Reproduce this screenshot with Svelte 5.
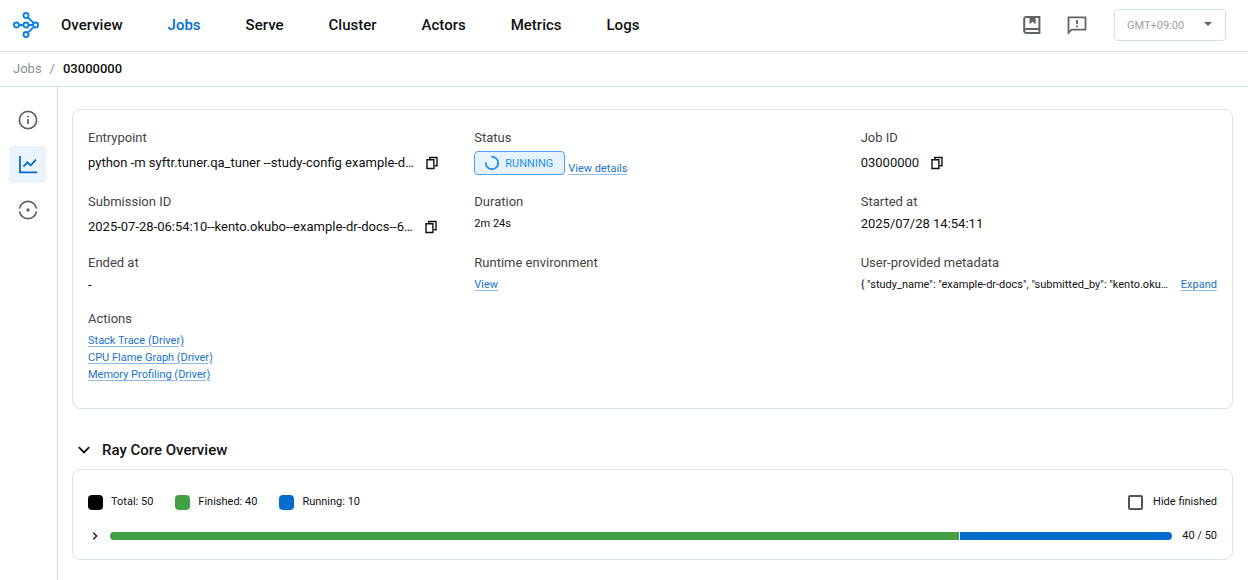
<script lang="ts">
  const navItems = ['Overview', 'Jobs', 'Serve', 'Cluster', 'Actors', 'Metrics', 'Logs'];
  const actions = ['Stack Trace (Driver)', 'CPU Flame Graph (Driver)', 'Memory Profiling (Driver)'];

  const total = 50;
  const finished = 40;
  const running = 10;

  const legend = [
    { name: 'Total', value: total, kind: 'total' },
    { name: 'Finished', value: finished, kind: 'finished' },
    { name: 'Running', value: running, kind: 'running' }
  ];

  let hideFinished = $state(false);
</script>

{#snippet copyButton(label: string)}
  <button class="copy" aria-label={label}>
    <svg width="12" height="14" viewBox="0 0 12 14" fill="none" stroke="currentColor" stroke-width="1.4">
      <path d="M3.8 3.4V1.5h7.2v8.3H8.6" />
      <path d="M1 3.8h6.9v8.7H1z" />
    </svg>
  </button>
{/snippet}

<header class="topbar">
  <a class="logo" href="#/" aria-label="Home">
    <svg width="28" height="28" viewBox="0 0 28 28" fill="none" stroke="#0f80e6" stroke-width="1.9">
      <circle cx="4.4" cy="14" r="2.5" />
      <circle cx="14" cy="14" r="2.5" />
      <circle cx="23.6" cy="14" r="2.5" />
      <circle cx="14" cy="4.5" r="2.5" />
      <circle cx="14" cy="23.5" r="2.5" />
      <path d="M6.9 14h4.6M16.5 14h4.6M15.8 6.3l6 5.8M15.8 21.7l6-5.8" />
    </svg>
  </a>
  <nav class="nav">
    {#each navItems as item}
      <a href="#/{item.toLowerCase()}" class:active={item === 'Jobs'}>{item}</a>
    {/each}
  </nav>
  <div class="tools">
    <a class="tool" href="#/docs" aria-label="Documentation">
      <svg width="20" height="20" viewBox="0 0 20 20" fill="none" stroke="currentColor" stroke-width="2">
        <path d="M17.4 14V2H4.2A1.9 1.9 0 0 0 2.2 4v12a2 2 0 0 0 2 2h13.2v-4H4.2a2 2 0 0 0-2 2" />
        <path d="M7.5 2h6.2v7.3l-3.1-2.5-3.1 2.5z" fill="currentColor" stroke="none" />
      </svg>
    </a>
    <a class="tool" href="#/feedback" aria-label="Feedback">
      <svg width="20" height="20" viewBox="0 0 20 20" fill="none" stroke="currentColor" stroke-width="1.8">
        <path d="M1.5 17.8V2.4h17v12.2H4.7z" />
        <path d="M10 4.9v4.2M10 10.4v1.9" />
      </svg>
    </a>
    <div class="timezone">
      <select aria-label="Timezone">
        <option>GMT+09:00</option>
      </select>
      <svg width="8" height="4" viewBox="0 0 8 4"><path d="M0 0h8L4 4z" fill="#666" /></svg>
    </div>
  </div>
</header>

<div class="breadcrumb">
  <a href="#/jobs">Jobs</a>
  <span class="slash">/</span>
  <span class="current">03000000</span>
</div>

<div class="body">
  <aside class="sidebar">
    <a href="#/info" aria-label="Info">
      <svg width="20" height="20" viewBox="0 0 20 20" fill="none" stroke="currentColor" stroke-width="1.7">
        <circle cx="10" cy="10" r="8.6" />
        <path d="M10 9v5M10 5.8v1.7" />
      </svg>
    </a>
    <a href="#/charts" class="active" aria-label="Charts">
      <svg width="20" height="20" viewBox="0 0 20 20" fill="none" stroke="currentColor" stroke-width="1.8">
        <path d="M2 1v16.4h17" />
        <path d="M5.4 11.7l4-4.4 3.3 3.2 5.2-5.8" />
      </svg>
    </a>
    <a href="#/actors" aria-label="Actors">
      <svg width="20" height="20" viewBox="0 0 20 20" fill="none" stroke="currentColor" stroke-width="1.7">
        <path d="M1.5 8.6a8.6 8.6 0 0 1 17 0M1.5 11.4a8.6 8.6 0 0 0 17 0" />
        <circle cx="10" cy="10" r="1.7" fill="currentColor" stroke="none" />
      </svg>
    </a>
  </aside>

  <main>
    <section class="card details">
      <div class="field">
        <h2>Entrypoint</h2>
        <div class="value copyable">
          <span class="ellipsis">python -m syftr.tuner.qa_tuner --study-config example-d…</span>
          {@render copyButton('Copy entrypoint')}
        </div>
      </div>
      <div class="field">
        <h2>Status</h2>
        <div class="status">
          <span class="chip">
            <svg width="16" height="16" viewBox="0 0 16 16" fill="none" stroke="currentColor" stroke-width="1.8">
              <path d="M7.4 1.8a6.2 6.2 0 1 1-5.6 5.6" />
            </svg>
            RUNNING
          </span>
          <a class="link" href="#/status">View details</a>
        </div>
      </div>
      <div class="field">
        <h2>Job ID</h2>
        <div class="value copyable">
          <span class="ellipsis">03000000</span>
          {@render copyButton('Copy job ID')}
        </div>
      </div>

      <div class="field">
        <h2>Submission ID</h2>
        <div class="value copyable">
          <span class="ellipsis">2025-07-28-06:54:10--kento.okubo--example-dr-docs--6…</span>
          {@render copyButton('Copy submission ID')}
        </div>
      </div>
      <div class="field">
        <h2>Duration</h2>
        <div class="value small">2m 24s</div>
      </div>
      <div class="field">
        <h2>Started at</h2>
        <div class="value">2025/07/28 14:54:11</div>
      </div>

      <div class="field">
        <h2>Ended at</h2>
        <div class="value">-</div>
      </div>
      <div class="field">
        <h2>Runtime environment</h2>
        <div class="value small"><a class="link" href="#/runtime">View</a></div>
      </div>
      <div class="field">
        <h2>User-provided metadata</h2>
        <div class="value small metadata">
          <span class="ellipsis">{'{ "study_name": "example-dr-docs", "submitted_by": "kento.oku…'}</span>
          <a class="link" href="#/metadata">Expand</a>
        </div>
      </div>

      <div class="field">
        <h2>Actions</h2>
        <div class="actions">
          {#each actions as action}
            <a class="link" href="#/actions">{action}</a>
          {/each}
        </div>
      </div>
    </section>

    <button class="section-title" aria-expanded="true">
      <svg width="12" height="8" viewBox="0 0 12 8" fill="none" stroke="currentColor" stroke-width="1.8">
        <path d="M.8 1.2L6 6.4l5.2-5.2" />
      </svg>
      Ray Core Overview
    </button>

    <section class="card overview">
      <div class="legend">
        {#each legend as entry}
          <span class="entry"><i class="swatch {entry.kind}"></i>{entry.name}: {entry.value}</span>
        {/each}
        <label class="hide">
          <input type="checkbox" bind:checked={hideFinished} />
          Hide finished
        </label>
      </div>
      <div class="progress">
        <button class="expand" aria-label="Expand tasks">
          <svg width="6" height="8" viewBox="0 0 6 8" fill="none" stroke="currentColor" stroke-width="1.3">
            <path d="M1.2.8L4.6 4 1.2 7.2" />
          </svg>
        </button>
        <div class="bar">
          {#if !hideFinished}
            <div class="segment finished" style="flex-grow: {finished}"></div>
          {/if}
          <div class="segment running" style="flex-grow: {running}"></div>
        </div>
        <span>{finished} / {total}</span>
      </div>
    </section>
  </main>
</div>

<style>
  :global(body) {
    margin: 0;
    background: #fff;
    color: #111;
    font-family: Roboto, 'Liberation Sans', sans-serif;
    font-size: 13px;
  }

  a {
    color: inherit;
    text-decoration: none;
  }

  button {
    padding: 0;
    border: 0;
    background: none;
    color: inherit;
    font: inherit;
    cursor: pointer;
  }

  svg {
    display: block;
    flex: none;
  }

  .topbar {
    display: flex;
    align-items: center;
    height: 50px;
    padding: 0 22px 1px 12px;
    border-bottom: 1px solid #d9e2ec;
  }

  .nav {
    display: flex;
    gap: 45px;
    margin-left: 21px;
    font-size: 15px;
    font-weight: 500;
  }

  .nav .active {
    color: #036dcf;
  }

  .tools {
    display: flex;
    align-items: center;
    gap: 25px;
    margin-left: auto;
    color: #5f6469;
  }

  .timezone {
    position: relative;
    margin-left: 2px;
  }

  .timezone select {
    display: block;
    width: 112px;
    height: 32px;
    padding: 0 12px;
    appearance: none;
    border: 1px solid #d3e0ec;
    border-radius: 4px;
    background: #fff;
    color: #a0a0a0;
    font: inherit;
    font-size: 11px;
  }

  .timezone svg {
    position: absolute;
    top: 13px;
    right: 14px;
    pointer-events: none;
  }

  .breadcrumb {
    display: flex;
    align-items: center;
    gap: 8px;
    height: 33px;
    padding: 0 13px 1px 13px;
    border-bottom: 1px solid #d3dfea;
    font-weight: 500;
  }

  .breadcrumb a,
  .slash {
    color: #8c9196;
    font-weight: 400;
  }

  .body {
    display: flex;
    min-height: calc(100vh - 87px);
  }

  .sidebar {
    display: flex;
    flex-direction: column;
    gap: 8px;
    padding: 14px 11px 0 9px;
    border-right: 1px solid #d3dfea;
    color: #5f6469;
  }

  .sidebar a {
    display: grid;
    place-items: center;
    width: 37px;
    height: 37px;
    border-radius: 4px;
  }

  .sidebar .active {
    background: #ebf3fb;
    color: #036dcf;
  }

  main {
    flex: 1;
    min-width: 0;
    padding: 22px 15px 0 14px;
  }

  .card {
    border: 1px solid #d8e2eb;
    border-radius: 8px;
  }

  .details {
    display: grid;
    grid-template-columns: repeat(3, minmax(0, 1fr));
    gap: 16px 30px;
    padding: 19px 15px 25px;
  }

  h2 {
    margin: 0 0 4px;
    color: #444;
    font-size: 13px;
    font-weight: 400;
    line-height: 18px;
  }

  .value {
    line-height: 18px;
  }

  .small {
    font-size: 11px;
  }

  .copyable {
    display: flex;
    align-items: center;
    gap: 12px;
    height: 23px;
  }

  .ellipsis {
    overflow: hidden;
    text-overflow: ellipsis;
    white-space: nowrap;
  }

  .status {
    display: flex;
    align-items: flex-end;
    gap: 3px;
    height: 26px;
  }

  .chip {
    display: flex;
    align-items: center;
    align-self: flex-start;
    gap: 5px;
    height: 22px;
    padding: 0 11px 0 9px;
    border: 1px solid #4ba3f0;
    border-radius: 4px;
    background: #e6f2fd;
    color: #2490ee;
    font-size: 11px;
  }

  .link {
    color: #1a73cc;
    font-size: 11px;
    line-height: 17px;
    text-decoration: underline;
    text-decoration-color: #8dbbe8;
    text-underline-offset: 2px;
  }

  .metadata {
    display: flex;
    gap: 8px;
  }

  .metadata .link {
    margin-left: auto;
  }

  .actions {
    display: flex;
    flex-direction: column;
    align-items: flex-start;
  }

  .section-title {
    display: flex;
    align-items: center;
    gap: 12px;
    margin: 30px 0 8px 6px;
    font-size: 15px;
    font-weight: 500;
    line-height: 22px;
  }

  .overview {
    padding: 24px 15px 15px;
    font-size: 11px;
    line-height: 16px;
  }

  .legend {
    display: flex;
    gap: 22px;
  }

  .entry,
  .hide {
    display: flex;
    align-items: center;
    gap: 8px;
  }

  .hide {
    gap: 10px;
    margin-left: auto;
  }

  .hide input {
    width: 15px;
    height: 15px;
    margin: 0;
    appearance: none;
    border: 2px solid #555;
    border-radius: 2px;
  }

  .hide input:checked {
    background: #036dcf;
  }

  .swatch {
    width: 15px;
    height: 15px;
    border-radius: 4px;
  }

  .total {
    background: #000;
  }

  .finished {
    background: #43a047;
  }

  .running {
    background: #036dcf;
  }

  .progress {
    display: flex;
    align-items: center;
    gap: 10px;
    margin-top: 18px;
  }

  .expand {
    display: grid;
    place-items: center;
    width: 12px;
    height: 16px;
    padding-left: 2px;
  }

  .bar {
    display: flex;
    flex: 1;
    gap: 1px;
    height: 8px;
    border-radius: 4px;
    overflow: hidden;
  }

  .segment {
    flex-basis: 0;
  }
</style>
